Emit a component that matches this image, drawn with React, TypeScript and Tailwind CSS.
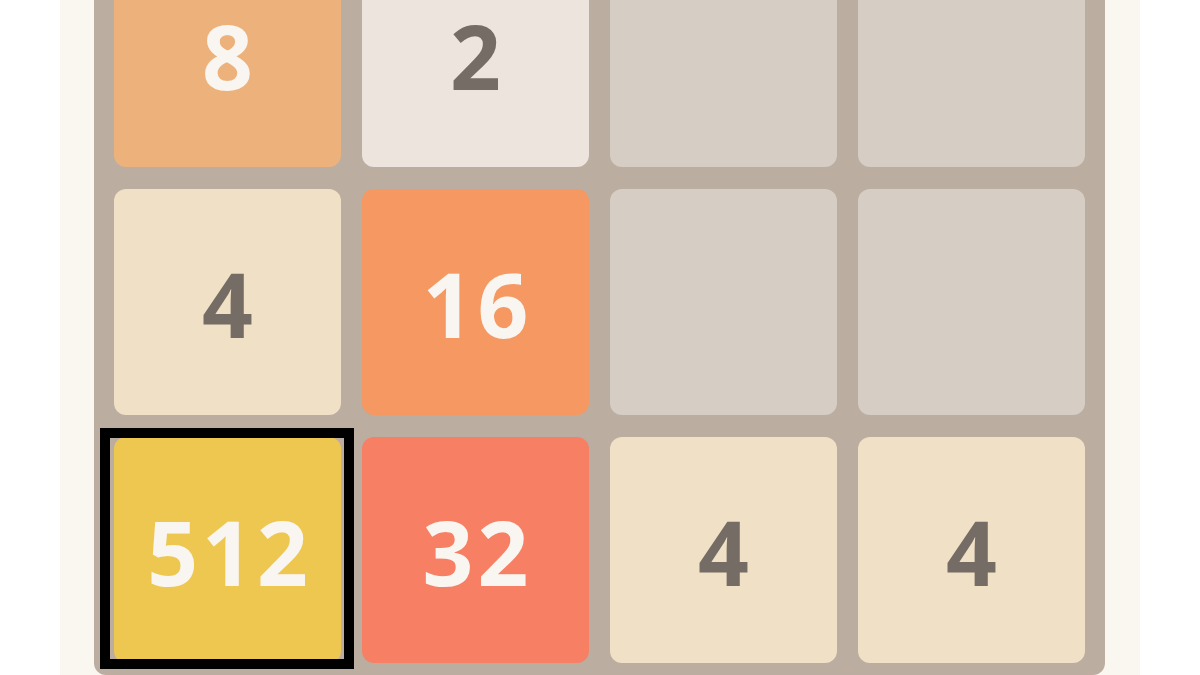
type Tile = { value?: number; selected?: boolean };

const tileStyles: Record<number, string> = {
  2: 'bg-[#eee4de] text-[#756d65]',
  4: 'bg-[#f0e0c5] text-[#756d65]',
  8: 'bg-[#edb27b] text-[#f9f6f2]',
  16: 'bg-[#f59862] text-[#f9f6f2]',
  32: 'bg-[#f77f63] text-[#f9f6f2]',
  512: 'bg-[#eec751] text-[#f9f6f2]',
};

const grid: Tile[][] = [
  [{ value: 8 }, { value: 2 }, {}, {}],
  [{ value: 4 }, { value: 16 }, {}, {}],
  [{ value: 512, selected: true }, { value: 32 }, { value: 4 }, { value: 4 }],
];

function Cell({ tile }: { tile: Tile }) {
  const style = tile.value ? tileStyles[tile.value] : 'bg-[#d6cdc4]';
  return (
    <div
      className={`relative flex h-[226px] w-[227px] items-center justify-center rounded-[12px] ${style}`}
    >
      {tile.value && (
        <span
          className="mt-[2px] pl-[4px] text-[89px] font-bold leading-none tracking-[4px]"
          style={{ fontFamily: '"Open Sans", "Liberation Sans", sans-serif' }}
        >
          {tile.value}
        </span>
      )}
      {tile.selected && (
        <div className="pointer-events-none absolute -left-[14px] -top-[9px] h-[241px] w-[254px] border-[10px] border-black" />
      )}
    </div>
  );
}

export default function App() {
  return (
    <div className="h-[675px] w-full overflow-hidden bg-white">
      <div className="mx-[60px] flex h-full flex-col bg-[#faf7f0] pl-[34px]">
        <div className="-mt-[79px] w-[1011px] rounded-[12px] bg-[#bbada0] px-[20px] pb-[12px] pt-[20px]">
          <div className="grid grid-cols-4 gap-x-[21px] gap-y-[22px]">
            {grid.map((row, r) =>
              row.map((tile, c) => <Cell key={`${r}-${c}`} tile={tile} />)
            )}
          </div>
        </div>
      </div>
    </div>
  );
}
